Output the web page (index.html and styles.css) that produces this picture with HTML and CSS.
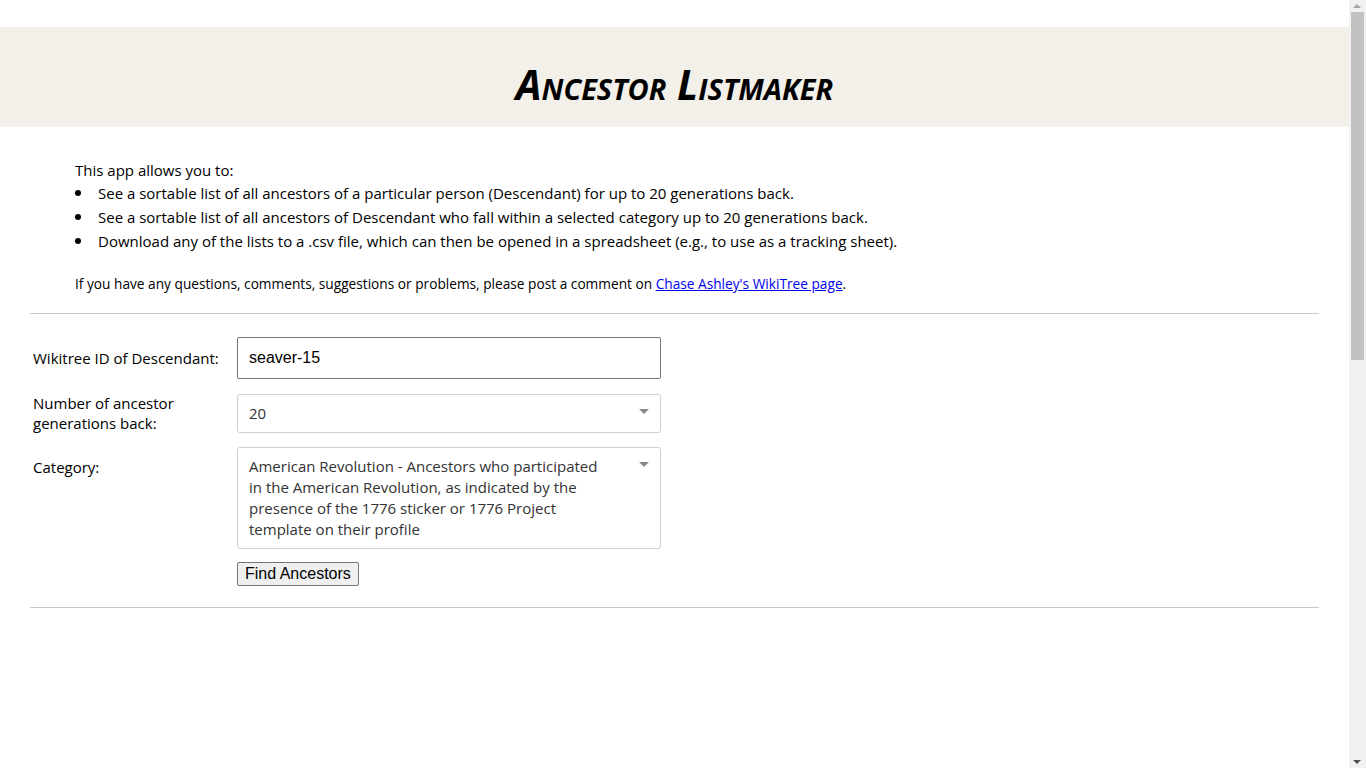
FILE: index.html
```html
<!DOCTYPE html>
<html lang="en">
<head>
    <meta charset="UTF-8">
    <meta name="viewport" content="width=device-width, initial-scale=1.0">
    <title>Ancestor Listmaker</title>
    <link rel="stylesheet" href="styles.css">
</head>
<body>
    <div class="header">
        <h1>Ancestor Listmaker</h1>
    </div>

    <div class="page">
        <div class="intro">
            <p class="lead">This app allows you to:</p>
            <ul>
                <li>See a sortable list of all ancestors of a particular person (Descendant) for up to 20 generations back.</li>
                <li>See a sortable list of all ancestors of Descendant who fall within a selected category up to 20 generations back.</li>
                <li>Download any of the lists to a .csv file, which can then be opened in a spreadsheet (e.g., to use as a tracking sheet).</li>
            </ul>
            <p class="note">If you have any questions, comments, suggestions or problems, please post a comment on <a href="#">Chase Ashley's WikiTree page</a>.</p>
        </div>

        <hr>

        <form class="form">
            <label class="label" for="wikiId">Wikitree ID of Descendant:</label>
            <input class="text-input" id="wikiId" type="text" value="seaver-15">

            <label class="label">Number of ancestor generations back:</label>
            <div class="select">
                <span>20</span>
                <span class="arrow"></span>
            </div>

            <label class="label top">Category:</label>
            <div class="select">
                <span>American Revolution - Ancestors who participated in the American Revolution, as indicated by the presence of the 1776 sticker or 1776 Project template on their profile</span>
                <span class="arrow"></span>
            </div>

            <span></span>
            <div><button type="button" class="find">Find Ancestors</button></div>
        </form>

        <hr>
    </div>

    <!-- window scrollbar, as seen in the screenshot -->
    <div class="scrollbar">
        <span class="sb-up"></span>
        <span class="sb-thumb"></span>
        <span class="sb-down"></span>
    </div>
</body>
</html>
```

FILE: styles.css
```css
html, body {
    margin: 0;
    padding: 0;
}
body {
    font-family: "Open Sans", "Noto Sans", sans-serif;
    font-size: 15px;
    color: #000;
    background: #fff;
    padding-right: 17px;
}
.header {
    margin-top: 27px;
    height: 100px;
    background: #f3f0e9;
    display: flex;
    align-items: center;
    justify-content: center;
}
.header h1 {
    margin: 14px 0 0 0;
    font-size: 41px;
    font-weight: bold;
    font-style: italic;
    font-variant: small-caps;
    letter-spacing: 0;
}
.page {
    padding: 0 30px;
}
.intro {
    padding: 32px 45px 9px 45px;
}
.intro p {
    margin: 0;
}
.lead {
    line-height: 22px;
}
.intro ul {
    margin: 0;
    padding: 0;
    list-style: none;
    line-height: 24px;
}
.intro li {
    position: relative;
    padding-left: 23px;
}
.intro li::before {
    content: "";
    position: absolute;
    left: 0;
    top: 9px;
    width: 6px;
    height: 6px;
    border-radius: 50%;
    background: #000;
}
.intro .note {
    margin-top: 21px;
    font-size: 13.7px;
    line-height: 20px;
}
.note a {
    color: #0000ee;
}
hr {
    margin: 10px 0;
    border: none;
    border-top: 1px solid #c8c8c8;
}
.form {
    display: grid;
    grid-template-columns: 196px 424px;
    column-gap: 8px;
    row-gap: 14px;
    align-items: center;
    padding: 13px 0 11px 3px;
}
.label {
    line-height: 20px;
}
.label.top {
    align-self: start;
    padding-top: 10px;
}
.text-input {
    box-sizing: border-box;
    height: 42px;
    width: 424px;
    border: 1px solid #767676;
    border-radius: 2px;
    padding: 0 11px;
    font-family: "Liberation Sans", Arial, sans-serif;
    font-size: 16px;
    color: #000;
}
.select {
    box-sizing: border-box;
    position: relative;
    border: 1px solid #cfcfcf;
    border-radius: 3px;
    padding: 8px 50px 8px 11px;
    line-height: 21px;
    color: #333;
    font-size: 15px;
}
.arrow {
    position: absolute;
    right: 11px;
    top: 14px;
    width: 0;
    height: 0;
    border-left: 5px solid transparent;
    border-right: 5px solid transparent;
    border-top: 5px solid #888;
}
.find {
    margin-top: -1px;
    font-family: "Liberation Sans", Arial, sans-serif;
    font-size: 16px;
    height: 24px;
    padding: 0 7px;
    background: #efefef;
    border: 1px solid #767676;
    border-radius: 2px;
    color: #000;
}
.scrollbar {
    position: fixed;
    top: 0;
    right: 0;
    bottom: 0;
    width: 17px;
    background: #f1f1f1;
}
.sb-thumb {
    position: absolute;
    top: 12px;
    left: 2px;
    width: 13px;
    height: 348px;
    background: #c1c1c1;
}
.sb-up, .sb-down {
    position: absolute;
    left: 4px;
    width: 0;
    height: 0;
    border-left: 4px solid transparent;
    border-right: 4px solid transparent;
}
.sb-up {
    top: 4px;
    border-bottom: 4px solid #a3a3a3;
}
.sb-down {
    bottom: 4px;
    border-top: 4px solid #505050;
}
```
